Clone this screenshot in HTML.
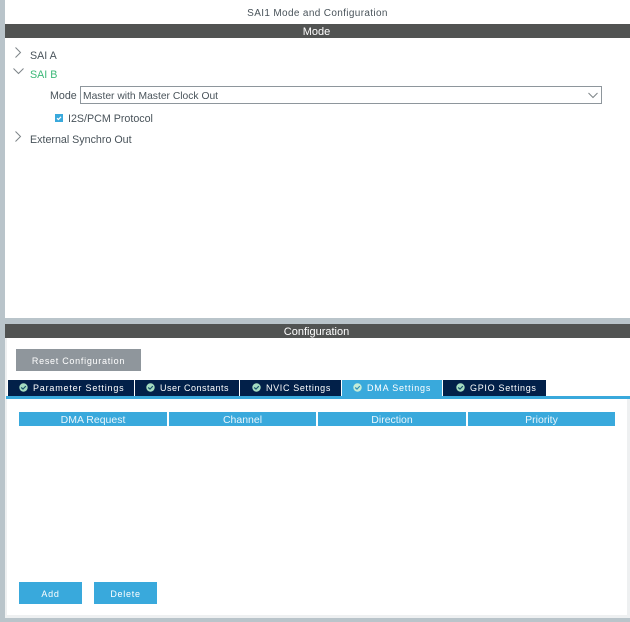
<!DOCTYPE html>
<html>
<head>
<meta charset="utf-8">
<style>
html,body{margin:0;padding:0;background:#fff;}
body{width:630px;height:622px;position:relative;overflow:hidden;font-family:"Liberation Sans",sans-serif;font-size:10.7px;color:#49535a;}
.a{position:absolute;white-space:nowrap;}
.hdr{left:5px;width:623px;padding-right:2px;background:#515352;color:#fff;text-align:center;height:14px;line-height:16px;font-size:11px;}
.tab{position:absolute;top:380px;height:16px;background:#022049;color:#fff;font-size:9px;line-height:17px;letter-spacing:.8px;white-space:nowrap;}
.tab svg{position:absolute;left:10px;top:2px;}
.tab span{position:absolute;top:0;}
.th{position:absolute;top:412px;height:14px;background:#39a9dc;color:#e8f5fb;text-align:center;line-height:16px;font-size:10.5px;}
.btn{position:absolute;background:#39a9dc;color:#fff;text-align:center;font-size:9px;letter-spacing:.72px;}
</style>
</head>
<body>
<div class="a" style="left:0;top:0;width:5px;height:622px;background:#b9c4ca;"></div>
<div class="a" style="left:0;top:618px;width:630px;height:4px;background:#b9c4ca;"></div>
<div class="a" style="left:5px;top:318px;width:625px;height:6px;background:#b9c4ca;"></div>
<div class="a" style="left:5px;top:338px;width:2px;height:280px;background:#eef0f1;"></div>
<div class="a" style="left:627px;top:399px;width:3px;height:219px;background:#eef0f1;"></div>
<div class="a" style="left:5px;top:615px;width:625px;height:3px;background:#eef0f1;"></div>

<div class="a" style="left:5px;width:625px;top:7px;text-align:center;font-size:10px;line-height:14px;letter-spacing:.35px;color:#49535a;">SAI1 Mode and Configuration</div>
<div class="a hdr" style="top:24px;">Mode</div>

<svg class="a" style="left:14px;top:46px;" width="10" height="13" viewBox="0 0 10 13"><path d="M1.500 1.500 L6.500 6.500 L1.500 11.500" fill="none" stroke="#7d8488" stroke-width="1"/></svg>
<div class="a" style="left:30px;top:49px;line-height:14px;">SAI A</div>
<svg class="a" style="left:12px;top:67px;" width="13" height="9" viewBox="0 0 13 9"><path d="M1.500 1.500 L6.500 6.500 L11.500 1.500" fill="none" stroke="#7d8488" stroke-width="1"/></svg>
<div class="a" style="left:30px;top:68px;line-height:14px;color:#3cb878;">SAI B</div>
<div class="a" style="left:50px;top:89px;line-height:14px;">Mode</div>
<div class="a" style="left:80px;top:86px;width:520px;height:16px;border:1px solid #8e969c;background:#fff;"></div>
<div class="a" style="left:83px;top:90px;line-height:14px;font-size:10.3px;">Master with Master Clock Out</div>
<svg class="a" style="left:587px;top:91px;" width="13" height="9" viewBox="0 0 13 9"><path d="M1.500 2 L6 6.500 L10.500 2" fill="none" stroke="#7d8488" stroke-width="1"/></svg>
<div class="a" style="left:55px;top:114px;width:8px;height:8px;background:#39a9dc;"></div>
<svg class="a" style="left:55px;top:114px;" width="8" height="8" viewBox="0 0 8 8"><path d="M2 4.200 L3.400 5.500 L6 2.800" fill="none" stroke="#fff" stroke-width="1.200"/></svg>
<div class="a" style="left:68px;top:112px;line-height:14px;">I2S/PCM Protocol</div>
<svg class="a" style="left:14px;top:130px;" width="10" height="13" viewBox="0 0 10 13"><path d="M1.500 1.500 L6.500 6.500 L1.500 11.500" fill="none" stroke="#7d8488" stroke-width="1"/></svg>
<div class="a" style="left:30px;top:133px;line-height:14px;">External Synchro Out</div>

<div class="a hdr" style="top:324px;">Configuration</div>
<div class="btn" style="left:16px;top:349px;width:125px;height:22px;line-height:25px;background:#8f969c;">Reset Configuration</div>

<div class="tab" style="left:8px;width:126px;"><svg width="11" height="11" viewBox="0 0 11 11"><circle cx="5.500" cy="5.500" r="4.200" fill="#a4dcc0"/><path d="M3.200 5.500 L5 7.100 L7.800 4.100" fill="none" stroke="#14506a" stroke-width="1.200"/></svg><span style="left:25px;">Parameter Settings</span></div>
<div class="tab" style="left:135px;width:104px;letter-spacing:.5px;"><svg width="11" height="11" viewBox="0 0 11 11"><circle cx="5.500" cy="5.500" r="4.200" fill="#a4dcc0"/><path d="M3.200 5.500 L5 7.100 L7.800 4.100" fill="none" stroke="#14506a" stroke-width="1.200"/></svg><span style="left:25px;">User Constants</span></div>
<div class="tab" style="left:240px;width:101px;letter-spacing:.65px;"><svg style="left:11px;" width="11" height="11" viewBox="0 0 11 11"><circle cx="5.500" cy="5.500" r="4.200" fill="#a4dcc0"/><path d="M3.200 5.500 L5 7.100 L7.800 4.100" fill="none" stroke="#14506a" stroke-width="1.200"/></svg><span style="left:26px;">NVIC Settings</span></div>
<div class="tab" style="left:342px;width:100px;background:#39a9dc;"><svg style="left:10px;" width="11" height="11" viewBox="0 0 11 11"><circle cx="5.500" cy="5.500" r="4.200" fill="#c5ecd8"/><path d="M3.200 5.500 L5 7.100 L7.800 4.100" fill="none" stroke="#2a8db8" stroke-width="1.200"/></svg><span style="left:25px;">DMA Settings</span></div>
<div class="tab" style="left:443px;width:103px;letter-spacing:.7px;"><svg style="left:12px;" width="11" height="11" viewBox="0 0 11 11"><circle cx="5.500" cy="5.500" r="4.200" fill="#a4dcc0"/><path d="M3.200 5.500 L5 7.100 L7.800 4.100" fill="none" stroke="#14506a" stroke-width="1.200"/></svg><span style="left:27px;">GPIO Settings</span></div>
<div class="a" style="left:6px;top:396px;width:624px;height:3px;background:#39a9dc;"></div>

<div class="th" style="left:19px;width:148px;">DMA Request</div>
<div class="th" style="left:169px;width:147px;">Channel</div>
<div class="th" style="left:318px;width:148px;">Direction</div>
<div class="th" style="left:468px;width:147px;">Priority</div>

<div class="btn" style="left:19px;top:582px;width:63px;height:22px;line-height:25px;">Add</div>
<div class="btn" style="left:94px;top:582px;width:63px;height:22px;line-height:25px;">Delete</div>
</body>
</html>
